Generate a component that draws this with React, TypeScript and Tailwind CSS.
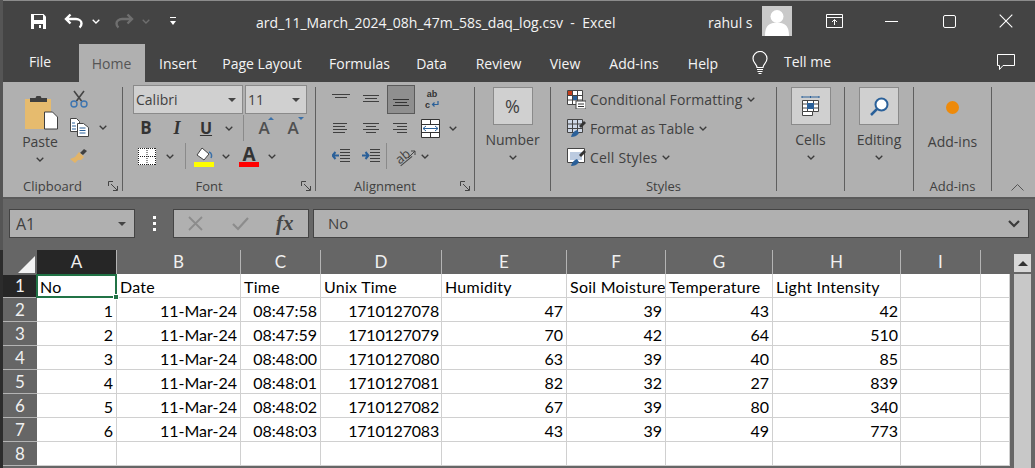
import React from "react";

const ui = { fontFamily: '"Open Sans","Noto Sans",sans-serif' };
const cal = { fontFamily: 'Lato,"Liberation Sans",sans-serif' };

function Chev({ c = "#3c3c3c", w = 8, className = "" }: { c?: string; w?: number; className?: string }) {
  return (
    <svg width={w} height={5} viewBox="0 0 8 5" className={"shrink-0 " + className}>
      <path d="M.7.7 4 4 7.3.7" fill="none" stroke={c} strokeWidth="1.3" />
    </svg>
  );
}

function Caret({ c = "#444" }: { c?: string }) {
  return (
    <svg width={8} height={4} viewBox="0 0 8 4" className="shrink-0">
      <path d="M0 0h8L4 4z" fill={c} />
    </svg>
  );
}

function Lines({ rows, c = "#3f3f3f" }: { rows: [number, number, number][]; c?: string }) {
  return (
    <svg width={18} height={18} viewBox="0 0 18 18" className="shrink-0">
      {rows.map((r, i) => (
        <path key={i} d={`M${r[0]} ${r[2]}.5H${r[1]}`} stroke={c} strokeWidth="1" />
      ))}
    </svg>
  );
}

function Launcher() {
  return (
    <svg width={11} height={11} viewBox="0 0 11 11">
      <path d="M.5 5V.5H5" fill="none" stroke="#444" />
      <path d="M3 3l6 6M5 9.500h4.500V5" fill="none" stroke="#444" />
    </svg>
  );
}

function Sep() {
  return <div className="w-px h-[104px] mt-[2px] bg-[#5f5f5f] shrink-0" />;
}

function Group({ w, label, children, launcher, shift = 0 }: { w: number; label?: string; children: React.ReactNode; launcher?: boolean; shift?: number }) {
  return (
    <div className="flex flex-col shrink-0 h-[111px]" style={{ width: w }}>
      <div className="h-[91px]">{children}</div>
      <div className="h-[20px] flex items-center relative">
        <div className="flex-1 text-center text-[13px] text-[#404040] leading-[20px]" style={{ paddingRight: shift }}>
          {label}
        </div>
        {launcher && (
          <div className="absolute right-[3px] top-[5px]">
            <Launcher />
          </div>
        )}
      </div>
    </div>
  );
}

function BigBtn({ label, children }: { label: string; children: React.ReactNode }) {
  return (
    <div className="flex flex-col items-center pt-[2px]">
      <div className="w-[40px] h-[38px] bg-[#d0d0d0] border border-[#8a8a8a] flex items-center justify-center">{children}</div>
      <div className="text-[14px] leading-[20px] mt-[5px] text-[#404040]">{label}</div>
      <Chev className="mt-[5px]" />
    </div>
  );
}

const tabs: [string, number, number][] = [
  ["Insert", 14, 36],
  ["Page Layout", 27, 80],
  ["Formulas", 27, 60],
  ["Data", 27, 31],
  ["Review", 28, 47],
  ["View", 27, 32],
  ["Add-ins", 27, 52],
  ["Help", 27, 32],
];

const cols = ["A", "B", "C", "D", "E", "F", "G", "H", "I"];
const rows: string[][] = [
  ["1", "11-Mar-24", "08:47:58", "1710127078", "47", "39", "43", "42"],
  ["2", "11-Mar-24", "08:47:59", "1710127079", "70", "42", "64", "510"],
  ["3", "11-Mar-24", "08:48:00", "1710127080", "63", "39", "40", "85"],
  ["4", "11-Mar-24", "08:48:01", "1710127081", "82", "32", "27", "839"],
  ["5", "11-Mar-24", "08:48:02", "1710127082", "67", "39", "80", "340"],
  ["6", "11-Mar-24", "08:48:03", "1710127083", "43", "39", "49", "773"],
];
const heads = ["No", "Date", "Time", "Unix Time", "Humidity", "Soil Moisture", "Temperature", "Light Intensity"];
const gridCols = "grid grid-cols-[34px_80px_124px_80px_121px_125px_99px_107px_128px_80px_29px]";

function Cell({ children, right, clip, tight, wide }: { children?: React.ReactNode; right?: boolean; clip?: boolean; tight?: boolean; wide?: boolean }) {
  return (
    <div
      className={
        "h-[24px] bg-white border-r border-b border-[#d0d0d0] text-[16px] leading-[26px] text-black whitespace-nowrap " +
        (right ? (wide ? "text-right pr-[2px]" : "text-right pr-[3px]") : "pl-[3px] tracking-[0.25px]") +
        (tight ? " tracking-[-0.2px]" : "") +
        (clip ? " overflow-hidden" : "")
      }
    >
      {children}
    </div>
  );
}

function RowHead({ n, active }: { n: number; active?: boolean }) {
  return (
    <div className={"h-[24px] border-b border-[#b4b4b4] text-[17px] leading-[24px] text-center text-[#f0f0f0] " + (active ? "bg-[#262626]" : "bg-[#666666]")}>
      {n}
    </div>
  );
}

export default function App() {
  return (
    <div className="w-[1035px] h-[468px] overflow-hidden bg-[#666666] flex" style={ui}>
      <div className="w-[3px] h-full shrink-0 flex flex-col">
        <div className="h-[250px] bg-[#555555]" />
        <div className="flex-1 bg-[#2c2c2c]" />
      </div>
      <div className="flex-1 flex flex-col min-w-0">
        {/* Title bar */}
        <div className="h-[41px] bg-[#444444] border-t border-[#8c8c8c] flex items-center text-white shrink-0">
          <svg width="17" height="17" viewBox="0 0 17 17" className="ml-[27px]">
            <path d="M1 1h12.500L16 3.500V16H1z" fill="#fff" />
            <rect x="4" y="2" width="9" height="5" fill="#444" />
            <rect x="4" y="11" width="9" height="5" fill="#444" />
            <rect x="9" y="12" width="2" height="3" fill="#fff" />
          </svg>
          <svg width="20" height="16" viewBox="0 0 20 16" className="ml-[17px]">
            <path d="M6.500 1.500 2 6l4.500 4.500M2.500 6H12c3 0 5.500 2 5.500 4.500 0 1.500-.6 3-2 4" fill="none" stroke="#fff" strokeWidth="2.400" />
          </svg>
          <Chev c="#fff" className="ml-[8px]" />
          <svg width="20" height="16" viewBox="0 0 20 16" className="ml-[14px]">
            <path d="M13.500 1.500 18 6l-4.500 4.500M17.500 6H8c-3 0-5.500 2-5.500 4.500 0 1.500.6 3 2 4" fill="none" stroke="#6f6f6f" strokeWidth="2.400" />
          </svg>
          <Chev c="#6f6f6f" className="ml-[8px]" />
          <svg width="8" height="9" viewBox="0 0 8 9" className="ml-[19px]">
            <path d="M1 .5h6" stroke="#fff" />
            <path d="M1 4h6L4 8z" fill="#fff" />
          </svg>
          <div className="w-[360px] ml-[79px] pt-[3px] text-[14px] tracking-[0.04px] whitespace-pre text-[#f4f4f4]">ard_11_March_2024_08h_47m_58s_daq_log.csv  -  Excel</div>
          <div className="ml-[92px] w-[44px] pt-[2px] text-[14px] whitespace-nowrap text-[#f4f4f4]">rahul s</div>
          <div className="ml-[10px] w-[30px] h-[30px] bg-[#c9c9c9] overflow-hidden">
            <svg width="30" height="30" viewBox="0 0 30 30">
              <circle cx="15" cy="10.500" r="6.500" fill="#fff" />
              <path d="M3 30c0-9 3-12 8-13h8c5 1 8 4 8 13z" fill="#fff" />
            </svg>
          </div>
          <svg width="17" height="14" viewBox="0 0 17 14" className="ml-[34px]">
            <path d="M.5.500h16v13H.5zM.5 3.500h16" fill="none" stroke="#fff" />
            <path d="M8.500 11V6M6 8l2.500-2.500L11 8" fill="none" stroke="#fff" />
          </svg>
          <div className="ml-[42px] w-[13px] h-px bg-white" />
          <div className="ml-[45px] w-[13px] h-[13px] border border-white rounded-[2px]" />
          <svg width="14" height="14" viewBox="0 0 14 14" className="ml-[43px]">
            <path d="M.7.7l12.600 12.600M13.300.7.7 13.300" stroke="#fff" strokeWidth="1.100" />
          </svg>
        </div>

        {/* Tabs */}
        <div className="h-[41px] bg-[#444444] flex items-end text-[14px] text-[#f4f4f4] shrink-0">
          <div className="ml-[25px] w-[24px] h-[38px] leading-[36px] text-center">File</div>
          <div className="ml-[27px] w-[66px] h-[38px] leading-[39px] text-center bg-[#b0b0b0] text-[#555555] pr-[1px]">Home</div>
          {tabs.map(([t, ml, w]) => (
            <div key={t} className="h-[38px] leading-[40px] text-center whitespace-nowrap" style={{ marginLeft: ml, width: w }}>
              {t}
            </div>
          ))}
          <div className="ml-[33px] h-[38px] flex items-center pb-[1px]">
            <svg width="16" height="24" viewBox="0 0 16 24">
              <path d="M5 16.500c0-3-4-4.500-4-9a7 7 0 0 1 14 0c0 4.500-4 6-4 9z" fill="none" stroke="#fff" strokeWidth="1.200" />
              <path d="M5 18.500h6M5.500 20.500h5M6.500 22.500h3" stroke="#fff" strokeWidth="1.200" />
            </svg>
          </div>
          <div className="ml-[16px] w-[50px] h-[38px] leading-[36px] whitespace-nowrap">Tell me</div>
          <div className="ml-[163px] h-[38px] flex items-start pt-[10px]">
            <svg width="18" height="17" viewBox="0 0 18 17">
              <path d="M.5.500h17v11H6l-3.500 4v-4h-2z" fill="none" stroke="#fff" />
            </svg>
          </div>
        </div>

        {/* Ribbon */}
        <div className="h-[115px] bg-[#b0b0b0] pt-[3px] flex text-[#404040] shrink-0 relative">
          {/* Clipboard */}
          <Group w={119} label="Clipboard" launcher shift={20}>
            <div className="flex">
              <div className="w-[64px] pl-[10px] flex flex-col items-center pt-[10px]">
                <svg width="35" height="35" viewBox="0 0 35 35" className="ml-[2px]">
                  <path d="M1 4h26v30H1z" fill="#e6bb6e" />
                  <path d="M6 7V3h5.500l1-2h4l1 2H23v4z" fill="#3f3f3f" />
                  <path d="M20.500 17h8l5 5v12h-13z" fill="#fff" stroke="#3f3f3f" />
                </svg>
                <div className="text-[14px] leading-[18px] mt-[3px] text-[#404040]">Paste</div>
                <Chev className="mt-[6px]" />
              </div>
              <div className="flex flex-col pt-[5px] pl-[3px]">
                <svg width="18" height="18" viewBox="0 0 18 18">
                  <path d="M4 1l7.500 10M14 1 6.500 11" stroke="#444" strokeWidth="1.600" />
                  <circle cx="4" cy="14" r="3" fill="none" stroke="#3c74b0" strokeWidth="1.400" />
                  <circle cx="14" cy="14" r="3" fill="none" stroke="#3c74b0" strokeWidth="1.400" />
                </svg>
                <div className="flex items-center mt-[10px]">
                  <svg width="19" height="19" viewBox="0 0 19 19">
                    <path d="M.5.500h6l3 3v10h-9z" fill="#fff" stroke="#444" />
                    <path d="M7.500 5.500h6l5 4v9h-11z" fill="#fff" stroke="#444" />
                    <path d="M2 5h3M2 8h4M2 11h4M9.500 10h6M9.500 12.500h6M9.500 15h6" stroke="#2a6099" />
                  </svg>
                  <Chev className="ml-[10px]" />
                </div>
                <svg width="18" height="16" viewBox="0 0 18 16" className="mt-[11px]">
                  <path d="M10 5l3-3 1-1 3 2-1 1-3 3z" fill="#404040" />
                  <path d="M9 4l5 5-3 3H8l-3 3-5-4 5-2z" fill="#e2b468" />
                </svg>
              </div>
            </div>
          </Group>
          <Sep />

          {/* Font */}
          <Group w={192} label="Font" launcher shift={20}>
            <div className="pl-[10px]">
              <div className="flex gap-[2px] h-[29px]">
                <div className="w-[110px] h-[29px] bg-[#d0d0d0] border border-[#8a8a8a] flex items-center justify-between pl-[2px] pr-[6px] text-[14px] text-[#404040]">
                  Calibri
                  <Caret />
                </div>
                <div className="w-[62px] h-[29px] bg-[#d0d0d0] border border-[#8a8a8a] flex items-center justify-between pl-[2px] pr-[6px] text-[14px] text-[#404040]">
                  11
                  <Caret />
                </div>
              </div>
              <div className="flex items-center h-[20px] mt-[4px]">
                <div className="w-[16px] ml-[5px] text-center font-bold text-[17px] leading-[20px] text-[#333]">B</div>
                <div className="w-[14px] ml-[16px] text-center font-bold italic text-[18px] leading-[20px] text-[#333]" style={{ fontFamily: '"Liberation Serif",serif' }}>I</div>
                <div className="w-[14px] ml-[15px] text-center font-bold underline text-[16px] leading-[20px] text-[#333]">U</div>
                <Chev className="ml-[12px]" />
                <div className="w-px h-[26px] bg-[#8a8a8a] ml-[10px]" />
                <div className="relative w-[16px] ml-[12px] text-center text-[17px] leading-[20px] font-semibold text-[#505050]">
                  A
                  <span className="absolute -top-[1px] -right-[2px] w-0 h-0 border-x-[3px] border-x-transparent border-b-[3px] border-b-[#3a70a8]" />
                </div>
                <div className="relative w-[16px] ml-[13px] text-center text-[17px] leading-[20px] font-semibold text-[#505050]">
                  A
                  <span className="absolute -top-[1px] -right-[3px] w-0 h-0 border-x-[3px] border-x-transparent border-t-[3px] border-t-[#3a70a8]" />
                </div>
              </div>
              <div className="flex items-center h-[20px] mt-[8px]">
                <svg width="18" height="17" viewBox="0 0 18 17" className="ml-[5px]">
                  <rect x="0" y="0" width="18" height="17" fill="#fff" />
                  <path d="M.5 0v17M17.500 0v17M9 0v17M0 .5h18M0 8.500h18M0 16.500h18" stroke="#222" strokeDasharray="1 1" />
                </svg>
                <Chev className="ml-[10px]" />
                <div className="w-px h-[26px] bg-[#8a8a8a] ml-[11px]" />
                <svg width="20" height="21" viewBox="0 0 20 21" className="ml-[8px]">
                  <path d="M8 2l7 6-5 6-7-5z" fill="#fff" stroke="#444" />
                  <path d="M15 6c3 1 3 4 2 6" fill="none" stroke="#3a70a8" strokeWidth="1.500" />
                  <rect y="16" width="20" height="5" fill="#ffff00" />
                </svg>
                <Chev className="ml-[8px]" />
                <div className="relative w-[20px] h-[21px] ml-[9px]">
                  <div className="text-center text-[19px] leading-[17px] font-bold text-[#333]">A</div>
                  <div className="absolute left-0 bottom-0 w-[20px] h-[5px] bg-[#ff0000]" />
                </div>
                <Chev className="ml-[9px]" />
              </div>
            </div>
          </Group>
          <Sep />

          {/* Alignment */}
          <Group w={158} label="Alignment" launcher shift={20}>
            <div className="pl-[16px]">
              <div className="flex items-center h-[29px]">
                <Lines rows={[[0, 18, 3], [3, 15, 6]]} />
                <div className="ml-[12px]"><Lines rows={[[1, 17, 4], [3, 15, 7], [1, 17, 10]]} /></div>
                <div className="ml-[7px] w-[28px] h-[29px] bg-[#8f8f8f] border border-[#5a5a5a] flex items-center justify-center">
                  <Lines rows={[[1, 17, 8], [3, 15, 11], [1, 17, 14]]} c="#333" />
                </div>
                <div className="ml-[8px] w-[18px] flex flex-col items-center text-[9px] leading-[10.5px] font-bold text-[#333]" style={{ fontFamily: '"Liberation Sans",sans-serif' }}>
                  <span>ab</span>
                  <div className="flex items-center gap-[1px]">
                    <span>c</span>
                    <svg width="8" height="7" viewBox="0 0 8 7">
                      <path d="M7 0v3.500H1.500M3.500 1.500l-2 2 2 2" fill="none" stroke="#2a6099" strokeWidth="1.200" />
                    </svg>
                  </div>
                </div>
              </div>
              <div className="flex items-center h-[20px] mt-[4px]">
                <Lines rows={[[1, 15, 4], [1, 13, 7], [1, 15, 10], [1, 13, 13]]} />
                <div className="ml-[12px]"><Lines rows={[[1, 17, 4], [4, 14, 7], [1, 17, 10], [4, 14, 13]]} /></div>
                <div className="ml-[12px]"><Lines rows={[[1, 15, 4], [5, 15, 7], [1, 15, 10], [5, 15, 13]]} /></div>
                <svg width="19" height="19" viewBox="0 0 19 19" className="ml-[11px]">
                  <path d="M.5.500h18v18H.5zM.5 5.500h18M.5 13.500h18M9.500.5v5M9.500 13.500v5" fill="#fff" stroke="#333" />
                  <path d="M2 9.500h15M5 7l-3 2.500L5 12M14 7l3 2.500-3 2.500" fill="none" stroke="#2a6099" />
                </svg>
                <Chev className="ml-[9px]" />
              </div>
              <div className="flex items-center h-[20px] mt-[8px]">
                <svg width="18" height="18" viewBox="0 0 18 18">
                  <path d="M8 2.500h10M8 5.500h10M8 8.500h10M8 11.500h10M8 14.500h10" stroke="#3f3f3f" />
                  <path d="M0 8.500h7M3.500 5l-3 3.500 3 3.500" fill="none" stroke="#2a6099" strokeWidth="2" />
                </svg>
                <svg width="18" height="18" viewBox="0 0 18 18" className="ml-[12px]">
                  <path d="M8 2.500h10M8 5.500h10M8 8.500h10M8 11.500h10M8 14.500h10" stroke="#3f3f3f" />
                  <path d="M0 8.500h7M3.500 5l3 3.500-3 3.500" fill="none" stroke="#2a6099" strokeWidth="2" />
                </svg>
                <div className="w-px h-[26px] bg-[#8a8a8a] ml-[6px]" />
                <div className="ml-[8px] w-[20px] h-[20px] flex items-center relative">
                  <span className="-rotate-[40deg] text-[13px] leading-[12px] text-[#444] border-b border-[#444]">ab</span>
                  <svg width="9" height="9" viewBox="0 0 9 9" className="absolute -right-[1px] top-[4px]">
                    <path d="M1 8 8 1M4 1h4v4" fill="none" stroke="#444" />
                  </svg>
                </div>
                <Chev className="ml-[6px]" />
              </div>
            </div>
          </Group>
          <Sep />

          {/* Number */}
          <Group w={75}>
            <BigBtn label="Number">
              <span className="text-[18px] text-[#404040]">%</span>
            </BigBtn>
          </Group>
          <Sep />

          {/* Styles */}
          <Group w={225} label="Styles">
            <div className="pl-[16px] pt-[4px] text-[14px] text-[#404040] whitespace-nowrap">
              <div className="flex items-center h-[20px]">
                <svg width="19" height="19" viewBox="0 0 19 19">
                  <path d="M.5.500h15v14H.5zM5.500.5v14M10.500.5v14M.5 5.500h15M.5 10h15" fill="#fff" stroke="#444" />
                  <rect x="1" y="1" width="4" height="4" fill="#c43e1c" />
                  <rect x="6" y="6" width="4" height="4" fill="#2a6099" />
                  <rect x="9" y="11" width="10" height="8" fill="#fff" stroke="#444" />
                  <path d="M11 14h6M11 16.500h6" stroke="#333" />
                </svg>
                <span className="ml-[4px] tracking-[0.1px]">Conditional Formatting</span>
                <Chev className="ml-[5px]" />
              </div>
              <div className="flex items-center h-[20px] mt-[9px]">
                <svg width="19" height="19" viewBox="0 0 19 19">
                  <path d="M.5.500h15v13H.5zM5.500.5v13M10.500.5v13M.5 5h15M.5 9.500h15" fill="#cfd8e6" stroke="#444" />
                  <path d="M12 7l5-5 2 2-5 5z" fill="#333" />
                  <path d="M4 18c1-4 3-6 6-7l2 3c-2 3-5 4-8 4z" fill="#2a6099" />
                </svg>
                <span className="ml-[4px]">Format as Table</span>
                <Chev className="ml-[5px]" />
              </div>
              <div className="flex items-center h-[20px] mt-[9px]">
                <svg width="19" height="19" viewBox="0 0 19 19">
                  <path d="M.5.500h17v14H.5z" fill="#fff" stroke="#444" />
                  <rect x="3" y="4" width="12" height="8" fill="#bccbe0" />
                  <path d="M12 7l5-5 2 2-5 5z" fill="#333" />
                  <path d="M4 18c1-4 3-6 6-7l2 3c-2 3-5 4-8 4z" fill="#2a6099" />
                </svg>
                <span className="ml-[4px] tracking-[0.2px]">Cell Styles</span>
                <Chev className="ml-[5px]" />
              </div>
            </div>
          </Group>
          <Sep />

          {/* Cells */}
          <Group w={67}>
            <BigBtn label="Cells">
              <svg width="19" height="20" viewBox="0 0 19 20">
                <path d="M1 1h17M1 0v2M18 0v2M9.500 0v2" stroke="#2a6099" />
                <path d="M1.500 4.500h16v11h-16zM1.500 8h16M1.500 12h16M6.500 4.500v11M12.500 4.500v11" fill="#fff" stroke="#444" />
                <rect x="6" y="7" width="7" height="6" fill="#2a6099" />
                <path d="M1.500 15.500h10v4h-10z" fill="#fff" stroke="#444" />
              </svg>
            </BigBtn>
          </Group>
          <Sep />

          {/* Editing */}
          <Group w={68}>
            <BigBtn label="Editing">
              <svg width="19" height="19" viewBox="0 0 19 19">
                <circle cx="11.500" cy="7.500" r="6" fill="#fff" stroke="#2a6099" strokeWidth="2" />
                <path d="M7 12l-6 6" stroke="#2a6099" strokeWidth="2.500" />
              </svg>
            </BigBtn>
          </Group>
          <Sep />

          {/* Add-ins */}
          <Group w={77} label="Add-ins">
            <div className="flex flex-col items-center pt-[16px]">
              <div className="w-[13px] h-[13px] rounded-full bg-[#ee8a0a]" />
              <div className="text-[14px] leading-[20px] mt-[18px] text-[#404040]">Add-ins</div>
            </div>
          </Group>
          <Sep />
          <div className="flex-1 flex justify-end items-end pr-[11px] pb-[6px]">
            <svg width="13" height="7" viewBox="0 0 13 7">
              <path d="M.5 6.500l6-6 6 6" fill="none" stroke="#555" />
            </svg>
          </div>
        </div>

        {/* Formula bar */}
        <div className="h-[53px] bg-[#666666] border-t-2 border-[#5a5a5a] flex items-start pt-[10px] shrink-0">
          <div className="ml-[6px] w-[126px] h-[29px] bg-[#b0b0b0] border border-[#444] flex items-center justify-between pl-[6px] pr-[8px] text-[16px] text-[#404040]">
            A1
            <Caret />
          </div>
          <div className="ml-[18px] w-[3px] h-[29px] flex flex-col justify-center gap-[3px]">
            <div className="w-[3px] h-[3px] bg-white" />
            <div className="w-[3px] h-[3px] bg-white" />
            <div className="w-[3px] h-[3px] bg-white" />
          </div>
          <div className="ml-[17px] w-[136px] h-[29px] bg-[#b0b0b0] border border-[#444] flex items-center">
            <svg width="15" height="15" viewBox="0 0 15 15" className="ml-[14px]">
              <path d="M1 1l13 13M14 1 1 14" stroke="#8c8c8c" strokeWidth="1.800" />
            </svg>
            <svg width="17" height="14" viewBox="0 0 17 14" className="ml-[29px]">
              <path d="M1 7l5 5L16 1" fill="none" stroke="#8c8c8c" strokeWidth="2.200" />
            </svg>
            <span className="ml-[27px] text-[21px] leading-none font-bold italic text-[#444]" style={{ fontFamily: '"Liberation Serif",serif' }}>fx</span>
          </div>
          <div className="ml-[4px] w-[716px] h-[29px] bg-[#b0b0b0] border border-[#444] flex items-center justify-between pl-[14px] pr-[8px] text-[15px] text-[#404040]">
            No
            <svg width="12" height="8" viewBox="0 0 12 8">
              <path d="M1 1l5 5 5-5" fill="none" stroke="#3a3a3a" strokeWidth="2.200" />
            </svg>
          </div>
        </div>

        {/* Sheet */}
        <div className="flex-1 flex min-h-0 overflow-hidden" style={cal}>
          <div className="w-[1007px] shrink-0">
            <div className={gridCols + " h-[24px]"}>
              <div className="relative bg-[#666666]">
                <div className="absolute right-[2px] bottom-[2px] w-0 h-0 border-l-[17px] border-l-transparent border-b-[17px] border-b-[#f2f2f2]" />
              </div>
              {cols.map((c, i) => (
                <div
                  key={c}
                  className={"text-center text-[17px] leading-[24px] text-[#f0f0f0] border-r border-b border-[#b4b4b4] " + (i === 0 ? "bg-[#262626]" : "bg-[#666666]")}
                >
                  {c}
                </div>
              ))}
              <div className="bg-[#666666] border-b border-[#b4b4b4]" />
            </div>
            <div className={gridCols}>
              <RowHead n={1} active />
              <div className="relative h-[24px] bg-white border-2 border-[#217346] text-[16px] leading-[22px] pl-[2px] tracking-[0.25px] text-black -ml-px">
                No
                <div className="absolute -right-[4px] -bottom-[4px] w-[6px] h-[6px] bg-[#217346] border border-white" />
              </div>
              {heads.slice(1).map((h) => (
                <Cell key={h} clip={h === "Soil Moisture"}>{h}</Cell>
              ))}
              <Cell />
              <Cell />
              {rows.map((r, i) => (
                <React.Fragment key={i}>
                  <RowHead n={i + 2} />
                  {r.map((v, j) => (
                    <Cell key={j} right tight={j === 3} wide={j === 3 || j === 7}>{v}</Cell>
                  ))}
                  <Cell />
                  <Cell />
                </React.Fragment>
              ))}
              <RowHead n={8} />
              {Array.from({ length: 10 }).map((_, i) => (
                <Cell key={i} />
              ))}
            </div>
          </div>
          <div className="w-[17px] ml-[4px] shrink-0 flex flex-col pt-[4px]">
            <div className="h-[18px] bg-[#d8d8d8] flex items-center justify-center">
              <svg width="10" height="5" viewBox="0 0 10 5"><path d="M5 0l5 5H0z" fill="#333" /></svg>
            </div>
            <div className="flex-1 mt-[2px] bg-[#c8c8c8]" />
          </div>
        </div>
      </div>
    </div>
  );
}
